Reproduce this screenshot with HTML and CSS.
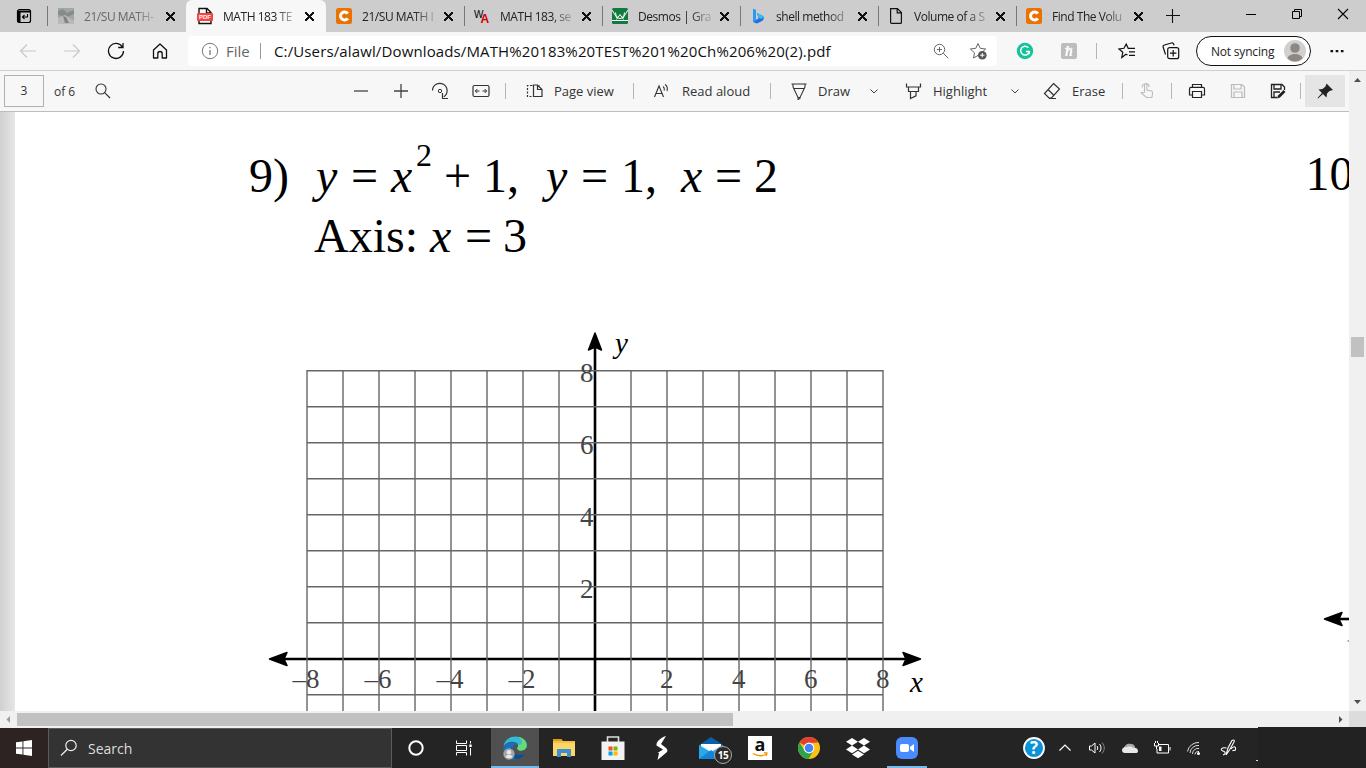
FILE: index.html
```
<!DOCTYPE html>
<html lang="en">
<head>
    <meta charset="UTF-8">
    <meta name="viewport" content="width=device-width, initial-scale=1.0">
    <title>MATH 183 TEST 1</title>
    <link rel="stylesheet" href="styles.css">
</head>
<body>
    <!-- Tabs -->
    <div class="tab-bar">
        <div class="tab-actions">
            <svg width="16" height="16" viewBox="0 0 16 16"><rect x="1.5" y="1.5" width="13" height="13" rx="2" fill="none" stroke="#000" stroke-width="1.2"/><path d="M1.5 2.5h13v2h-10v10h-3z" fill="#000"/><path d="M11.5 6v3H6.500M8.500 7L6.500 9l2 2" fill="none" stroke="#000" stroke-width="1.1"/></svg>
        </div>
        <div class="tab muted">
            <svg width="16" height="16" viewBox="0 0 16 16"><rect width="16" height="16" fill="#a3a7a3"/><path d="M0 3l5-2 4 4 7-3v4l-7 3-9-2z" fill="#868d88"/><path d="M0 10l7-3 9 6v3H0z" fill="#b9bab7"/><path d="M5 8l3 1 3 6H7z" fill="#7c8582"/></svg>
            <span class="title">21/SU MATH-</span><span class="close"></span>
        </div>
        <div class="tab active">
            <svg width="16" height="18" viewBox="0 0 16 18"><path d="M2 1.500h8l4 4v11H2z" fill="#fff" stroke="#111" stroke-width="1.4"/><path d="M9.500 1v5H14" fill="none" stroke="#111" stroke-width="1.4"/><rect x="0" y="6" width="16" height="8" rx="1" fill="#f8423f"/><text x="8" y="12.300" class="pdf-label">PDF</text></svg>
            <span class="title">MATH 183 TE</span><span class="close"></span>
        </div>
        <div class="tab">
            <svg width="16" height="16" viewBox="0 0 16 16"><rect width="16" height="16" rx="2.500" fill="#eb7100"/><path d="M11.800 5.700A4 4 0 1 0 11.800 10.300" fill="none" stroke="#fff" stroke-width="3"/></svg>
            <span class="title">21/SU MATH I</span><span class="close"></span>
        </div>
        <div class="tab">
            <svg width="16" height="16" viewBox="0 0 16 16"><text class="wolfram"><tspan x="0" y="9.500">W</tspan><tspan x="6.500" y="14.500" class="wa-a">A</tspan></text></svg>
            <span class="title">MATH 183, se</span><span class="close"></span>
        </div>
        <div class="tab">
            <svg width="16" height="16" viewBox="0 0 16 16"><rect width="16" height="16" rx="1.500" fill="#127a3d"/><path d="M0 2l5 8M16 2l-5 8M0 12.500h16M3.500 4.500c.5 8 8.500 8 9 0M4.500 11.500l3.500-5 3.500 5" fill="none" stroke="#fff" stroke-width="1"/></svg>
            <span class="title">Desmos | Gra</span><span class="close"></span>
        </div>
        <div class="tab">
            <svg width="16" height="16" viewBox="0 0 16 16"><path d="M3 .8l3 1v10.500L3 14z" fill="#2a9bf2"/><path d="M7 5l6 3c1.500 2 .5 4-1 5l-5 2.500L3 14l5.500-3.500z" fill="#1b6fe8"/><path d="M7 5l6 3-1 3-3.500-1z" fill="#38bdf0"/></svg>
            <span class="title">shell method</span><span class="close"></span>
        </div>
        <div class="tab">
            <svg width="16" height="16" viewBox="0 0 16 16"><path d="M2.600.6h6.800l4 4v9.800a1 1 0 0 1-1 1H3.600a1 1 0 0 1-1-1zM9.200.8v4h4" fill="none" stroke="#111" stroke-width="1.200"/></svg>
            <span class="title">Volume of a S</span><span class="close"></span>
        </div>
        <div class="tab">
            <svg width="16" height="16" viewBox="0 0 16 16"><rect width="16" height="16" rx="2.500" fill="#eb7100"/><path d="M11.800 5.700A4 4 0 1 0 11.800 10.300" fill="none" stroke="#fff" stroke-width="3"/></svg>
            <span class="title">Find The Volu</span><span class="close"></span>
        </div>
        <svg class="new-tab" width="16" height="16" viewBox="0 0 16 16"><path d="M1 7.500h14M7.500 1v14" stroke="#111" stroke-width="1.1"/></svg>
        <div class="window-buttons">
            <svg width="12" height="12" viewBox="0 0 12 12"><path d="M1 6.500h10" stroke="#000"/></svg>
            <svg width="12" height="12" viewBox="0 0 12 12"><path d="M1.500 3.500h7v7h-7zM3.500 3.500v-2h7v7h-2" fill="none" stroke="#000"/></svg>
            <svg width="12" height="12" viewBox="0 0 12 12"><path d="M1 1l10 10M11 1L1 11" stroke="#000" stroke-width="1.1"/></svg>
        </div>
    </div>

    <!-- Address bar -->
    <div class="nav-bar">
        <svg width="18" height="18" viewBox="0 0 18 18"><path d="M17 9H2M8 2.500L1.500 9 8 15.500" fill="none" stroke="#c8c8c8" stroke-width="1.2"/></svg>
        <svg width="18" height="18" viewBox="0 0 18 18"><path d="M1 9h15M10 2.500L16.500 9 10 15.500" fill="none" stroke="#c8c8c8" stroke-width="1.2"/></svg>
        <svg width="18" height="18" viewBox="0 0 18 18"><path d="M15.500 5.200A7.500 7.500 0 1 0 16.500 9M16 1v4.500h-4.800" fill="none" stroke="#111" stroke-width="1.3"/></svg>
        <svg width="18" height="18" viewBox="0 0 18 18"><path d="M2.500 8L9 2l6.500 6v8h-4.300v-4.300a2.200 2.200 0 0 0-4.400 0V16H2.500z" fill="none" stroke="#111" stroke-width="1.3" stroke-linejoin="round"/></svg>
        <div class="url-box">
            <svg width="18" height="18" viewBox="0 0 18 18"><circle cx="9" cy="9" r="7.700" fill="none" stroke="#777"/><path d="M9 8v5M9 5v1.300" stroke="#777" stroke-width="1.300"/></svg>
            <span class="scheme">File</span>
            <span class="url">C:/Users/alawl/Downloads/MATH%20183%20TEST%201%20Ch%206%20(2).pdf</span>
            <svg width="18" height="18" viewBox="0 0 18 18"><circle cx="7.500" cy="7.500" r="5.200" fill="none" stroke="#666"/><path d="M5 7.500h5M7.500 5v5M11.300 11.300l5 5" stroke="#666"/></svg>
            <svg width="18" height="18" viewBox="0 0 18 18"><path d="M9.500 13.200L4.500 16l1-5.200L1.300 7l5.500-.7L9 1.500l2.300 4.800 5.400.7-3 2.700" fill="none" stroke="#666"/><circle cx="13.300" cy="13.200" r="4.300" fill="#555"/><path d="M13.300 11v4.400M11.100 13.200h4.400" stroke="#fff"/></svg>
        </div>
        <svg width="18" height="18" viewBox="0 0 18 18"><circle cx="9" cy="9" r="8.200" fill="#15c39a"/><path d="M12.300 5.700a4.400 4.400 0 1 0 1.100 3.800H10M13.300 9.500v2.800" fill="none" stroke="#fff" stroke-width="1.500"/></svg>
        <svg width="18" height="18" viewBox="0 0 18 18"><rect x="1" y="1" width="16" height="16" rx="2" fill="#bdbdbd"/><text x="9" y="14" class="honey">h</text><path d="M5 6.500c2 1 5-1 7.500 0" fill="none" stroke="#fff"/></svg>
        <span class="bar"></span>
        <svg width="18" height="18" viewBox="0 0 18 18"><path d="M9.500 13L8 12.300 3.800 15.500l1-5.300L1 7l5-.7L8.200 2l2 4.300h6.800M11 9.800h6M11 13.300h6" fill="none" stroke="#111" stroke-width="1.200"/></svg>
        <svg width="18" height="18" viewBox="0 0 18 18"><rect x="5.700" y="5.700" width="11" height="11" rx="2" fill="none" stroke="#111" stroke-width="1.200"/><path d="M11.200 8v6.400M8 11.200h6.400M3.500 12.500L1.200 5.300c-.3-1 .2-2 1.200-2.300l7-2c1-.3 2 .2 2.300 1.200l.3 1.200" fill="none" stroke="#111" stroke-width="1.200"/></svg>
        <div class="profile">
            <span>Not syncing</span>
            <svg width="22" height="22" viewBox="0 0 22 22"><circle cx="11" cy="11" r="11" fill="#d2cfcc"/><circle cx="11" cy="8" r="4.800" fill="#8c8886"/><path d="M3.500 18.500c1-6 14-6 15 0a11 11 0 0 1-15 0z" fill="#8c8886"/></svg>
        </div>
        <svg width="18" height="18" viewBox="0 0 18 18"><path d="M2.500 8h2.600v2.200H2.500zM7.700 8h2.600v2.200H7.700zM12.900 8h2.600v2.200h-2.600z" fill="#111"/></svg>
    </div>

    <div class="viewer">
        <div class="viewer-main">
            <!-- PDF toolbar -->
            <div class="pdf-bar">
                <span class="page-number">3</span>
                <span class="page-count">of 6</span>
                <svg width="18" height="18" viewBox="0 0 18 18"><circle cx="7" cy="7" r="5" fill="none" stroke="#333" stroke-width="1.100"/><path d="M10.700 10.700L16 16" stroke="#333" stroke-width="1.200"/></svg>
                <svg width="18" height="18" viewBox="0 0 18 18"><path d="M2 9h14" stroke="#444" stroke-width="1.300"/></svg>
                <svg width="18" height="18" viewBox="0 0 18 18"><path d="M2 9h14M9 2v14" stroke="#444" stroke-width="1.300"/></svg>
                <svg width="18" height="18" viewBox="0 0 18 18"><path d="M1.500 8.500a7.300 7.300 0 1 1 11.300 6.300M11.500 11v5.500H17" fill="none" stroke="#333" stroke-width="1.200"/><circle cx="9" cy="9" r="1.700" fill="none" stroke="#333"/></svg>
                <svg width="18" height="18" viewBox="0 0 18 18"><rect x="1" y="3.500" width="16" height="11" rx="1.500" fill="none" stroke="#333" stroke-width="1.200"/><path d="M3.500 9h4M10.500 9h4M5.300 7L3.300 9l2 2M12.700 7l2 2-2 2" fill="none" stroke="#333"/></svg>
                <span class="bar"></span>
                <svg width="18" height="18" viewBox="0 0 18 18"><path d="M7.500 3.500H15M7 3.500H2.500v11H7" fill="none" stroke="#333" stroke-width="1.200" stroke-dasharray="2 1.500"/><path d="M8.500 3h4L17 7.500v7H8.500zM12.500 3v4.500H17" fill="#f7f7f7" stroke="#333" stroke-width="1.200"/></svg>
                <span>Page view</span>
                <span class="bar"></span>
                <svg width="18" height="18" viewBox="0 0 18 18"><path d="M1.500 15L6 4l4.500 11M3 11.500h6M10 4.500c1.500 1 1.500 2.500 1.300 4M12 2.500c2.300 1.500 2.700 4 2 6.500" fill="none" stroke="#333" stroke-width="1.100"/></svg>
                <span>Read aloud</span>
                <span class="bar"></span>
                <svg width="18" height="18" viewBox="0 0 18 18"><path d="M1.500 2h15M3 2v3l5 10.500h2L15 5V2M3.500 6.500h11M8 15v2.500l2-1V15" fill="none" stroke="#333" stroke-width="1.100"/></svg>
                <span>Draw</span>
                <svg class="chevron" width="10" height="10" viewBox="0 0 10 10"><path d="M1.500 3.500L5 7l3.500-3.500" fill="none" stroke="#444"/></svg>
                <svg width="18" height="18" viewBox="0 0 18 18"><path d="M1.500 1.500v3.500h14V1.500M3.500 5v4.500h10V5M5.500 9.500v7l5.500-2.700V9.500" fill="none" stroke="#333" stroke-width="1.200"/></svg>
                <span>Highlight</span>
                <svg class="chevron" width="10" height="10" viewBox="0 0 10 10"><path d="M1.500 3.500L5 7l3.500-3.500" fill="none" stroke="#444"/></svg>
                <svg width="18" height="18" viewBox="0 0 18 18"><path d="M10.500 1.500l6 5.500-8 9H6L1.500 11.500zM5 7.500l6 6M6 16.500h7" fill="none" stroke="#333" stroke-width="1.200"/></svg>
                <span>Erase</span>
                <span class="bar"></span>
                <svg width="18" height="18" viewBox="0 0 18 18"><path d="M6.500 10V3a1.200 1.200 0 0 1 2.400 0v5l4.500 1c1 .3 1.300 1 1.200 2l-.7 4.500H8.500L3 11c.6-1 1.700-1 2.500-.3zM4.300 5.500C3 1 12 0 11 5" fill="none" stroke="#bbb" stroke-width="1.100"/></svg>
                <span class="bar"></span>
                <svg width="18" height="18" viewBox="0 0 18 18"><path d="M4 13H1.500V7c0-1 .6-1.700 1.500-1.700h12c1 0 1.500.7 1.500 1.700v6H14M4.500 5V2.500h9V5M4.500 9.500h9v6h-9z" fill="none" stroke="#222" stroke-width="1.200"/></svg>
                <svg width="18" height="18" viewBox="0 0 18 18"><path d="M2.500 2.500h10.500l2.500 2.500v10.500h-13zM5 2.500v4.500h7V2.500M5 15.500V10h8v5.500" fill="none" stroke="#bbb" stroke-width="1.200"/></svg>
                <svg width="18" height="18" viewBox="0 0 18 18"><path d="M8 15.500H2.500v-13H13L15.500 5v3M5 2.500v4.500h7V2.500M5 15.500V10h6" fill="none" stroke="#222" stroke-width="1.300"/><path d="M8 16.500l1-3L14.500 8l2 2L11 15.500z" fill="#222"/></svg>
                <span class="bar"></span>
                <span class="pin"><svg width="18" height="18" viewBox="0 0 18 18"><path d="M10.500 1.500L17 8l-3.500 1-2.500 2.500-.5 4L7 12l-5 4.500-.5-.5L6 11 2.500 7.500l4-.5L9.500 4.500z" fill="#222"/></svg></span>
            </div>

            <!-- PDF page -->
            <svg class="pdf-page" width="1349" height="599" viewBox="0 112 1349 599">
                <g class="problem">
                    <text y="192"><tspan x="249">9)</tspan><tspan x="316" class="var">y</tspan><tspan x="351">=</tspan><tspan x="391" class="var">x</tspan><tspan x="444">+</tspan><tspan x="483">1,</tspan><tspan x="546" class="var">y</tspan><tspan x="581">=</tspan><tspan x="621">1,</tspan><tspan x="681" class="var">x</tspan><tspan x="715">=</tspan><tspan x="754">2</tspan></text>
                    <text x="416" y="166" class="power">2</text>
                    <text y="251.500"><tspan x="314">Axis:</tspan><tspan x="430" class="var">x</tspan><tspan x="465">=</tspan><tspan x="503">3</tspan></text>
                    <text x="1305.500" y="190">10</text>
                </g>

                <g class="axis">
                    <path d="M595 345V711M280 659H910"/>
                    <path class="head" d="M595 333L601.500 350L595 347L588.500 350Z"/>
                    <path class="head" d="M269.500 659L287 652.500L284 659L287 665.500Z"/>
                    <path class="head" d="M920.500 659L903 652.500L906 659L903 665.500Z"/>
                    <path d="M1335 619H1349"/>
                    <path class="head" d="M1324.500 619L1342 612.500L1339 619L1342 625.500Z"/>
                </g>
                <path class="grid" d="M306.300 370.800H883.700M306.300 406.800H883M306.300 442.800H883M306.300 478.800H883M306.300 514.800H883M306.300 550.800H883M306.300 586.800H883M306.300 622.800H883M306.300 694.800H883
                    M307 371V711M343 371V711M379 371V711M415 371V711M451 371V711M487 371V711M523 371V711M559 371V711M631 371V711M667 371V711M703 371V711M739 371V711M775 371V711M811 371V711M847 371V711M883 371V711"/>
                <g class="ticks">
                    <text x="580" y="382">8</text><text x="580" y="454">6</text><text x="580" y="526">4</text><text x="580" y="598">2</text>
                    <text x="292.500" y="688">–8</text><text x="364.500" y="688">–6</text><text x="436.500" y="688">–4</text><text x="508.500" y="688">–2</text>
                    <text x="660" y="688">2</text><text x="732" y="688">4</text><text x="804" y="688">6</text><text x="876" y="688">8</text>
                </g>
                <text x="615" y="352.500" class="axis-name">y</text>
                <text x="910" y="692" class="axis-name">x</text>
                <path d="M1347.500 641H1349" stroke="#555"/>
            </svg>

            <div class="h-scroll">
                <svg width="17" height="17" viewBox="0 0 17 17"><path d="M10 5v7L6.500 8.500z" fill="#999"/></svg>
                <div class="h-thumb"></div>
                <svg width="17" height="17" viewBox="0 0 17 17"><path d="M7 5v7l3.500-3.500z" fill="#505050"/></svg>
            </div>
        </div>
        <div class="v-scroll">
            <svg width="17" height="17" viewBox="0 0 17 17"><path d="M5 11h7L8.500 7z" fill="#505050"/></svg>
            <div class="v-thumb"></div>
            <svg width="17" height="17" viewBox="0 0 17 17"><path d="M5 6h7L8.500 10z" fill="#505050"/></svg>
            <div class="corner"></div>
        </div>
    </div>

    <!-- Taskbar -->
    <div class="taskbar">
        <span class="start"><svg width="16" height="16" viewBox="0 0 16 16"><path d="M0 2.300L6.500 1.400v6H0zM7.400 1.200L16 0v7.400H7.400zM0 8.400h6.500v6.200L0 13.700zM7.400 8.400H16V16l-8.600-1.200z" fill="#fff"/></svg></span>
        <div class="search">
            <svg width="18" height="18" viewBox="0 0 18 18"><circle cx="11" cy="6.500" r="5.200" fill="none" stroke="#eee" stroke-width="1.200"/><path d="M7.300 10.200L1 16.500" stroke="#eee" stroke-width="1.300"/></svg>
            <span>Search</span>
        </div>
        <span class="cortana"><svg width="18" height="18" viewBox="0 0 18 18"><circle cx="9" cy="9" r="6.700" fill="none" stroke="#fff" stroke-width="2"/></svg></span>
        <span class="task-view"><svg width="18" height="18" viewBox="0 0 18 18"><path d="M1.500 1.500v3h10v-3M1.500 6.500h10v5h-10zM1.500 16.500v-3h10v3M15.500 2v2.500M15.500 9v7.500" fill="none" stroke="#fff"/><path d="M14.300 5.500h2.400V8h-2.400z" fill="#fff"/></svg></span>
        <span class="running current"><svg width="24" height="24" viewBox="0 0 24 24"><path d="M.5 10.500C2-3 23-2 24 9c0 6-8 7-9.500 4-.8-1.700 1-1.800.5-4C14 5 4 4 .5 10.500z" fill="#35b9d9"/><path d="M15 1C22 2 24 7 23.500 11c-1 4-8 4.500-9 2-.8-1.700 1-1.800.5-4 6 0 5-5 0-8z" fill="#66dc70"/><path d="M.5 11C4 5 13 5 14.500 9 12 8 9.500 10 9.500 13c0 5 6 7.500 12.500 5C16 27 0 25 .5 11z" fill="#1870bd"/><path d="M8.500 11c-4 5 1 14 8 11.500 3-1.200 4.500-3 5.500-4.500-7 3-13-1-13.500-7z" fill="#0c4d91"/><circle cx="6" cy="18" r="5.700" fill="#a5a5a5"/><circle cx="6" cy="16.200" r="2.300" fill="#e8e8e8"/><path d="M2.500 21c1-3 6-3 7 0-2 1.800-5 1.800-7 0z" fill="#e8e8e8"/></svg></span>
        <span><svg width="22" height="20" viewBox="0 0 22 20"><path d="M0 1h8l2 2h12v15H0z" fill="#f6c143"/><path d="M0 1h8l1.500 2H0z" fill="#e29a13"/><path d="M0 5h22v13H0z" fill="#fcd667"/><path d="M4 19v-8h14v8h-4v-4H8v4z" fill="#3b90d5"/></svg></span>
        <span><svg width="24" height="24" viewBox="0 0 24 24"><path d="M6.500 6V1h11v5" fill="none" stroke="#ddd" stroke-width="1.600"/><path d="M.5 5.500h23V24H.5z" fill="#f3f3f3"/><path d="M7.500 10.500h4v4h-4z" fill="#f25022"/><path d="M12.500 10.500h4v4h-4z" fill="#7fba00"/><path d="M7.500 15.500h4v4h-4z" fill="#00a4ef"/><path d="M12.500 15.500h4v4h-4z" fill="#ffb900"/></svg></span>
        <span><svg width="14" height="24" viewBox="0 0 14 24"><path d="M11 0C5 2 1 6 1.500 9.500L8 13.500 2.500 17l1.500 0-1.500 7L12 16c1-2 0-3-1-4L6 8z" fill="#fff"/></svg></span>
        <span class="mail"><svg width="24" height="24" viewBox="0 0 24 24"><path d="M0 9L12 1l12 8v12H0z" fill="#0b5ea8"/><path d="M2 8h20v8H2z" fill="#fff"/><path d="M0 9l12 7L24 9v14H0z" fill="#2aa8ea"/><path d="M0 23l12-9 12 9z" fill="#1384d6"/></svg><b class="badge">15</b></span>
        <span><svg width="24" height="24" viewBox="0 0 24 24"><path d="M0 0h24v24H0z" fill="#fff"/><text x="12" y="15" class="amazon-a">a</text><path d="M5 17.500c5 3 10 2.500 13.500.5M16 16.700l3 .3-1 3" fill="none" stroke="#f79400" stroke-width="1.300"/></svg></span>
        <span><svg width="24" height="24" viewBox="0 0 24 24"><circle cx="12" cy="12" r="11" fill="#fbc116"/><path d="M12 12L2.500 6.500A11 11 0 0 1 21.500 6.500L12 7z" fill="#e33e2f"/><path d="M2.500 6.500A11 11 0 0 0 11.500 23l5-8.500H7.500z" fill="#2ba24c"/><circle cx="12" cy="12" r="5.400" fill="#fff"/><circle cx="12" cy="12" r="4.300" fill="#4285f4"/></svg></span>
        <span><svg width="24" height="22" viewBox="0 0 24 22"><path d="M6 1l6 3.800-6 3.800L0 4.800zM18 1l6 3.800-6 3.800-6-3.800zM6 8.600l6 3.800-6 3.800-6-3.800zM18 8.600l6 3.800-6 3.800-6-3.800zM12 13.800l6 3.700-6 3.700-6-3.700z" fill="#fff"/></svg></span>
        <span class="running zoom"><svg width="24" height="24" viewBox="0 0 24 24"><rect x="1" y="1" width="22" height="22" rx="6" fill="#4a8cff"/><rect x="5" y="8" width="9" height="8" rx="2" fill="#fff"/><path d="M15 11l4-3v8l-4-3z" fill="#fff"/></svg></span>
        <span></span>
        <span><svg width="22" height="22" viewBox="0 0 22 22"><circle cx="11" cy="11" r="10" fill="#0a93d8" stroke="#fff" stroke-width="1.800"/><text x="11" y="17.200" class="help-mark">?</text></svg></span>
        <span><svg width="14" height="14" viewBox="0 0 14 14"><path d="M1.500 9.500L7 4l5.500 5.500" fill="none" stroke="#fff" stroke-width="1.200"/></svg></span>
        <span><svg width="18" height="16" viewBox="0 0 18 16"><path d="M1.500 6h2L7 3v10l-3.500-3h-2zM9 6c1 1.300 1 2.700 0 4M11.500 4c2 2.500 2 5.500 0 8" fill="none" stroke="#fff"/><path d="M14 2.500c3 3.500 3 7.500 0 11" fill="none" stroke="#888"/></svg></span>
        <span><svg width="18" height="14" viewBox="0 0 18 14"><path d="M3 8c0-4 4-6 7-5 3 0 4 2 4 4z" fill="#aaa"/><path d="M1 9c0-2 2-3.500 5-3 3-1 6 0 6 1 3-1 5 1 5 3 0 1.500-1 2-2 2H4c-2 0-3-1-3-3z" fill="#e8e8e8"/></svg></span>
        <span><svg width="18" height="16" viewBox="0 0 18 16"><path d="M6 4.500h9.500v8.500H4V9M17 7v3.500M1.500 3v3h4V3M2.500 3V1M4.500 3V1M3.500 6v3" fill="none" stroke="#fff"/><path d="M6 6.500h2.500V11H6z" fill="#fff"/></svg></span>
        <span><svg width="16" height="16" viewBox="0 0 16 16"><path d="M1.500 11.500A11 11 0 0 1 13 2.500M4 13A8 8 0 0 1 13 5.500M6.500 14A5.500 5.500 0 0 1 13 8.500M9 14.500A3.500 3.500 0 0 1 13 11.500" fill="none" stroke="#ddd"/><circle cx="12.500" cy="13.500" r="1.500" fill="#fff"/></svg></span>
        <span><svg width="18" height="18" viewBox="0 0 18 18"><path d="M6 16L8 9l4-7.500c1.500-1 3 0 2 1.500L9.500 11 6 16zM6.500 9C1 8 0 11 3 12s3 3 0 4M11 10c3-4 5-2 4.500.500-.5 2-2 0-3 1.500" fill="none" stroke="#fff" stroke-width="1.100"/></svg></span>
        <span class="dash"></span>
        <span class="clock-cover"></span>
    </div>
</body>
</html>
```
FILE: styles.css
```
body {
    margin: 0;
    width: 1366px;
    height: 768px;
    overflow: hidden;
    display: flex;
    flex-direction: column;
    background-color: #f7f7f7;
    font-family: 'Open Sans', 'Noto Sans', sans-serif;
    font-size: 12px;
    color: #222;
}

svg {
    display: block;
    flex: none;
}

/* Tabs */
.tab-bar {
    display: flex;
    height: 32px;
    background-color: #cdcdcd;
    flex: none;
}

.tab-actions {
    width: 32px;
    padding: 8px 0 0 16px;
    box-sizing: border-box;
    margin-right: 15px;
}

.tab {
    display: flex;
    align-items: center;
    width: 138px;
    box-sizing: border-box;
    padding-left: 10px;
    position: relative;
}

.tab::before {
    content: "";
    position: absolute;
    left: 0;
    top: 6px;
    width: 1px;
    height: 20px;
    background-color: #777;
}

.tab.muted {
    width: 139px;
    padding-left: 11px;
    color: #666;
}

.tab.active {
    width: 140px;
    padding-left: 11px;
    background-color: #f7f7f7;
    border-radius: 6px 6px 0 0;
}

.tab.active::before,
.tab.active + .tab::before {
    display: none;
}

.title {
    width: 74px;
    margin-left: 10px;
    white-space: nowrap;
    letter-spacing: -0.45px;
    -webkit-mask-image: linear-gradient(to right, #000 70%, rgba(0, 0, 0, 0.15));
    mask-image: linear-gradient(to right, #000 70%, rgba(0, 0, 0, 0.15));
}

.close {
    width: 9px;
    height: 9px;
    margin-left: 8px;
    background: linear-gradient(45deg, transparent 44%, #111 44%, #111 56%, transparent 56%),
                linear-gradient(-45deg, transparent 44%, #111 44%, #111 56%, transparent 56%);
}

.new-tab {
    margin: 8px 0 0 11px;
}

.window-buttons {
    display: flex;
    gap: 34px;
    margin: 8px 0 0 64px;
}

.pdf-label {
    font: bold 6px 'Liberation Sans', sans-serif;
    fill: #fff;
    text-anchor: middle;
}

.wolfram {
    font: 10px 'Liberation Sans', sans-serif;
}

.wa-a {
    font-size: 12px;
    font-weight: bold;
    fill: #d40000;
}

/* Address bar */
.nav-bar {
    display: grid;
    grid-template-columns: 44px 44px 44px 37px 828px 44px 36px 22px 44px 34px 132px 18px;
    align-items: center;
    height: 38px;
    padding-left: 19px;
    border-bottom: 1px solid #cfcfcf;
    flex: none;
}

.url-box {
    display: grid;
    grid-template-columns: 25px 35px 671px 37px 18px;
    align-items: center;
    width: 809px;
    height: 30px;
    padding-left: 13px;
    box-sizing: border-box;
    background-color: #fff;
    border-radius: 4px;
}

.scheme {
    color: #666;
    font-size: 15px;
    border-right: 1px solid #999;
    line-height: 16px;
}

.url {
    padding-left: 13px;
    color: #111;
    font-size: 15px;
    letter-spacing: 0.13px;
}

.honey {
    font: italic bold 14px 'Liberation Serif', serif;
    fill: #fff;
    text-anchor: middle;
}

.bar {
    width: 1px;
    height: 16px;
    background-color: #b5b5b5;
}

.profile {
    display: flex;
    align-items: center;
    justify-content: space-between;
    width: 115px;
    height: 30px;
    padding: 0 4px 0 14px;
    box-sizing: border-box;
    border: 1px solid #111;
    border-radius: 15px;
    background-color: #fff;
    letter-spacing: -0.2px;
}

/* PDF viewer */
.viewer {
    display: flex;
    height: 657px;
    flex: none;
}

.viewer-main {
    width: 1349px;
}

.pdf-bar {
    display: grid;
    grid-template-columns: 50px 40px 258px 40px 39px 41px 33px 20px 29px 79px 20px 29px 88px 20px 28px 51px 36px 28px 77px 33px 29px 50px 16px 33px 17px 41px 40px 31px 5px 40px;
    align-items: center;
    height: 40px;
    padding-left: 4px;
    border-bottom: 1px solid #bdbdbd;
    color: #333;
    font-size: 13px;
    white-space: nowrap;
}

.page-number,
.page-count {
    font-size: 12px;
}

.page-number {
    width: 38px;
    height: 30px;
    line-height: 30px;
    border: 1px solid #b0b0b0;
    text-align: center;
}

.pin {
    display: flex;
    align-items: center;
    justify-content: center;
    width: 40px;
    height: 32px;
    background-color: #e5e5e5;
}

.pdf-page {
    background: linear-gradient(to right, #d0d0d0, #e6e6e6 15px, #fff 15px);
}

.problem {
    font: 48px 'Liberation Serif', serif;
    fill: #000;
}

.var {
    font-style: italic;
}

.power {
    font-size: 32px;
}

.axis {
    fill: none;
    stroke: #000;
    stroke-width: 2.6px;
}

.head {
    fill: #000;
    stroke-width: 1.5px;
    stroke-linejoin: round;
}

.grid {
    fill: none;
    stroke: #666;
    stroke-width: 1.4px;
}

.ticks {
    font: 27px 'Liberation Serif', serif;
    fill: #444;
}

.axis-name {
    font: italic 29px 'Liberation Serif', serif;
}

.h-scroll {
    display: flex;
    align-items: center;
    justify-content: space-between;
    height: 17px;
    background-color: #f0f0f0;
}

.h-thumb {
    width: 716px;
    height: 13px;
    margin-right: auto;
    background-color: #c1c1c1;
}

.v-scroll {
    display: flex;
    flex-direction: column;
    width: 17px;
    background-color: #f0f0f0;
}

.v-thumb {
    width: 13px;
    height: 20px;
    margin: 249px 2px auto;
    background-color: #c1c1c1;
}

.corner {
    height: 17px;
    background-color: #dcdcdc;
}

/* Taskbar */
.taskbar {
    display: grid;
    grid-template-columns: 48px 344px 49px 50px 48px repeat(8, 49px) 87px 32px 30px 34px 32px 31px 34px 36px 11px 108px;
    height: 40px;
    background-color: #252424;
    flex: none;
}

.taskbar > span {
    display: flex;
    align-items: center;
    justify-content: center;
}

.taskbar .start {
    background-color: #2c2322;
}

.search {
    display: flex;
    align-items: center;
    gap: 10px;
    padding-left: 11px;
    background-color: #333;
    border: 1px solid #5c5c5c;
    color: #ddd;
    font-size: 14px;
}

.taskbar .cortana {
    padding-right: 2px;
}

.taskbar .task-view {
    padding-right: 4px;
}

.running {
    box-sizing: border-box;
    padding-top: 2px;
    border-bottom: 2px solid #76b9ed;
}

.current {
    background-color: #505050;
}

.zoom {
    width: 40px;
    justify-self: center;
}

.mail {
    position: relative;
}

.badge {
    position: absolute;
    left: 28px;
    top: 18px;
    width: 16px;
    height: 16px;
    border: 1px solid #aaa;
    border-radius: 50%;
    background-color: #2b2b2b;
    color: #fff;
    font-size: 10px;
    line-height: 16px;
    text-align: center;
    letter-spacing: -0.5px;
}

.amazon-a {
    font: bold 18px 'Open Sans', sans-serif;
    fill: #111;
    text-anchor: middle;
}

.help-mark {
    font: bold 17px 'Open Sans', sans-serif;
    fill: #fff;
    text-anchor: middle;
}

.taskbar .dash {
    align-self: end;
    justify-self: end;
    width: 2px;
    height: 1px;
    margin-bottom: 7px;
    background-color: #ddd;
}

.clock-cover {
    background-color: #222;
    margin-top: -1px;
}
```
